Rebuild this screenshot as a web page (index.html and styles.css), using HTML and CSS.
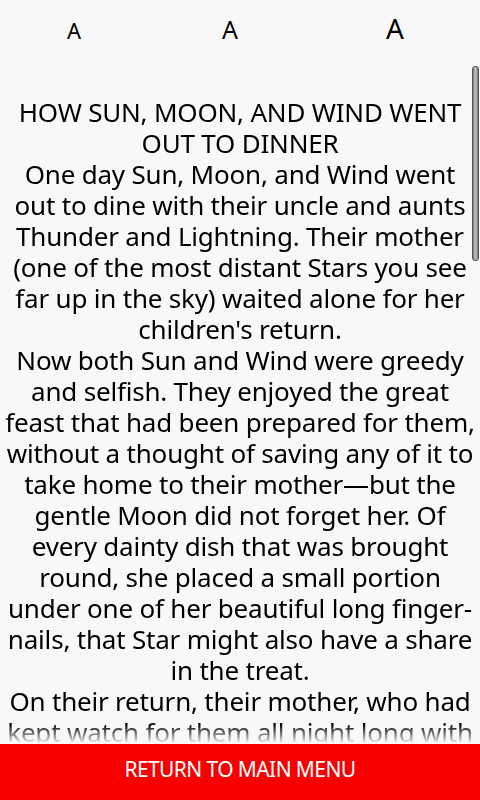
FILE: index.html
```html
<!DOCTYPE html>
<html lang="en">
<head>
    <meta charset="UTF-8">
    <meta name="viewport" content="width=device-width, initial-scale=1.0">
    <title>How Sun, Moon, and Wind Went Out to Dinner</title>
    <link rel="stylesheet" href="styles.css">
</head>
<body>
    <div class="app">
        <!-- text size picker: small, medium, large -->
        <div class="size-bar">
            <button class="size-btn size-small">A</button>
            <button class="size-btn size-medium">A</button>
            <button class="size-btn size-large">A</button>
        </div>

        <div class="reader">
            <div class="reader-text">
                <div class="story">
                    <p>HOW SUN, MOON, AND WIND WENT<br>OUT TO DINNER</p>
                    <p>One day Sun, Moon, and Wind went<br>out to dine with their uncle and aunts<br>Thunder and Lightning. Their mother<br>(one of the most distant Stars you see<br>far up in the sky) waited alone for her<br>children's return.</p>
                    <p>Now both Sun and Wind were greedy<br>and selfish. They enjoyed the great<br>feast that had been prepared for them,<br>without a thought of saving any of it to<br>take home to their mother—but the<br>gentle Moon did not forget her. Of<br>every dainty dish that was brought<br>round, she placed a small portion<br>under one of her beautiful long finger-<br>nails, that Star might also have a share<br>in the treat.</p>
                    <p>On their return, their mother, who had<br>kept watch for them all night long with</p>
                </div>
            </div>
            <div class="scroll-thumb"></div>
        </div>

        <div class="menu-bar">RETURN TO MAIN MENU</div>
    </div>
</body>
</html>
```

FILE: styles.css
```css
body {
    margin: 0;
    background: #f8f8f8;
    font-family: "Noto Sans", "Open Sans", sans-serif;
    color: #000;
}

.app {
    height: 800px;
    display: flex;
    flex-direction: column;
}

/* top row of "A" buttons */
.size-bar {
    height: 64px;
    box-sizing: border-box;
    padding-top: 14px;
    display: grid;
    grid-template-columns: 148px 164px 166px;
    align-items: baseline;
}
.size-btn {
    background: none;
    border: 0;
    padding: 0;
    font-family: inherit;
    color: #000;
    line-height: 28px;
    text-align: center;
}
.size-small { font-size: 22px; }
.size-medium { font-size: 25px; }
.size-large { font-size: 28px; }

/* story view */
.reader {
    flex: 1;
    min-height: 0;
    position: relative;
}
.reader-text {
    height: 100%;
    overflow: hidden;
    -webkit-mask-image: linear-gradient(to bottom, #000 calc(100% - 20px), transparent);
    mask-image: linear-gradient(to bottom, #000 calc(100% - 20px), transparent);
}
.story {
    padding-top: 33px;
    font-size: 26px;
    letter-spacing: -0.2px;
    line-height: 31px;
    text-align: center;
    white-space: nowrap;
}
.story p {
    margin: 0;
}
.scroll-thumb {
    position: absolute;
    top: 2px;
    right: 1px;
    width: 5px;
    height: 193px;
    border: 1px solid #555;
    border-radius: 3px;
    background: linear-gradient(to right, #777, #c4c4c4 50%, #777);
}

/* bottom bar */
.menu-bar {
    height: 56px;
    flex-shrink: 0;
    box-sizing: border-box;
    padding-bottom: 6px;
    display: flex;
    align-items: center;
    justify-content: center;
    background: #f90000;
    color: #fff;
    font-size: 21px;
    letter-spacing: -0.6px;
}
```
